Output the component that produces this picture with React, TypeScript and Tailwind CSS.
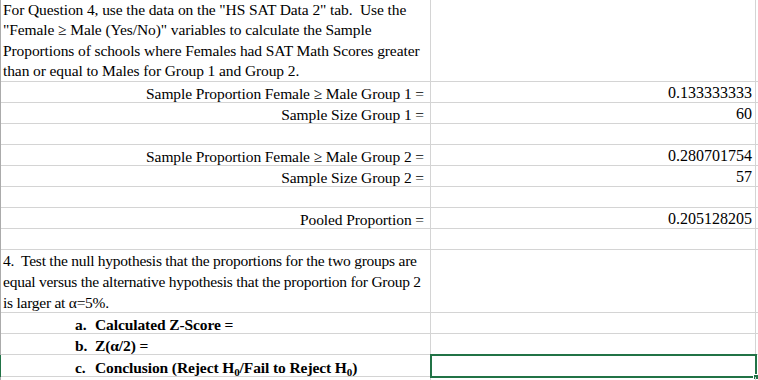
import React from "react";

type RowProps = {
  h: string;
  label?: React.ReactNode;
  value?: React.ReactNode;
  selected?: boolean;
  labelClass?: string;
};

function Row({ h, label, value, selected, labelClass = "" }: RowProps) {
  return (
    <div className={`flex ${h}`}>
      <div
        className={`w-[430px] shrink-0 border-b border-r border-[#d4d4d4] ${labelClass}`}
      >
        {label}
      </div>
      <div className="relative w-[325px] shrink-0 border-b border-r border-[#d4d4d4] flex items-end justify-end pr-[3px] pb-[1px] leading-none text-[16px] tracking-normal">
        {value}
        {selected && (
          <div className="absolute left-[-1px] top-[-1px] w-[327px] h-[24px] border-2 border-[#217346]">
            <div className="absolute right-[-4px] bottom-[-4px] w-[6px] h-[6px] bg-[#217346] border border-white" />
          </div>
        )}
      </div>
      <div className="flex-1 border-b border-[#d4d4d4]" />
    </div>
  );
}

function RightLabel({ children }: { children: React.ReactNode }) {
  return (
    <div className="h-full flex items-end justify-end pr-[6px] pb-[1px] leading-none">
      <span>{children}</span>
    </div>
  );
}

function Step({ mark, children }: { mark: string; children: React.ReactNode }) {
  return (
    <div className="h-full flex items-end pl-[74px] pb-[1px] leading-none font-bold">
      <span className="w-[20px]">{mark}</span>
      <span>{children}</span>
    </div>
  );
}

function Sub({ children }: { children: React.ReactNode }) {
  return <span className="relative top-[3px] text-[11px]">{children}</span>;
}

export default function App() {
  return (
    <div className="w-[758px] h-[380px] overflow-hidden bg-white text-black text-[15.5px] tracking-[-0.1px] font-['Liberation_Serif','Times_New_Roman',serif]">
      <div className="flex">
        <div className="w-[1px] shrink-0 flex flex-col">
          <div className="h-[355px] bg-[#ababab]" />
          <div className="h-[22px] bg-[#217346]" />
          <div className="flex-1 bg-[#ababab]" />
        </div>
        <div className="flex-1 flex flex-col">
          <Row
            h="h-[82px]"
            labelClass="pl-[2px] leading-[20.25px]"
            label={
              <p>
                For Question 4, use the data on the "HS SAT Data 2" tab.&nbsp; Use the
                "Female ≥ Male (Yes/No)" variables to calculate the Sample
                Proportions of schools where Females had SAT Math Scores greater
                than or equal to Males for Group 1 and Group 2.
              </p>
            }
          />
          <Row
            h="h-[21px]"
            label={<RightLabel>Sample Proportion Female ≥ Male Group 1 =</RightLabel>}
            value="0.133333333"
          />
          <Row
            h="h-[21px]"
            label={<RightLabel>Sample Size Group 1 =</RightLabel>}
            value="60"
          />
          <Row h="h-[21px]" />
          <Row
            h="h-[21px]"
            label={<RightLabel>Sample Proportion Female ≥ Male Group 2 =</RightLabel>}
            value="0.280701754"
          />
          <Row
            h="h-[21px]"
            label={<RightLabel>Sample Size Group 2 =</RightLabel>}
            value="57"
          />
          <Row h="h-[21px]" />
          <Row
            h="h-[21px]"
            label={<RightLabel>Pooled Proportion =</RightLabel>}
            value="0.205128205"
          />
          <Row h="h-[21px]" />
          <Row
            h="h-[63px]"
            labelClass="pl-[2px] leading-[21px] tracking-[-0.25px]"
            label={
              <p>
                4.&nbsp; Test the null hypothesis that the proportions for the two groups are
                equal versus the alternative hypothesis that the proportion for Group 2
                is larger at α=5%.
              </p>
            }
          />
          <Row h="h-[21px]" label={<Step mark="a.">Calculated Z-Score =</Step>} />
          <Row h="h-[21px]" label={<Step mark="b.">Z(α/2) =</Step>} />
          <Row
            h="h-[22px]"
            selected
            label={
              <Step mark="c.">
                Conclusion (Reject H<Sub>0</Sub>/Fail to Reject H<Sub>0</Sub>)
              </Step>
            }
          />
          <Row h="h-[21px]" />
        </div>
      </div>
    </div>
  );
}
